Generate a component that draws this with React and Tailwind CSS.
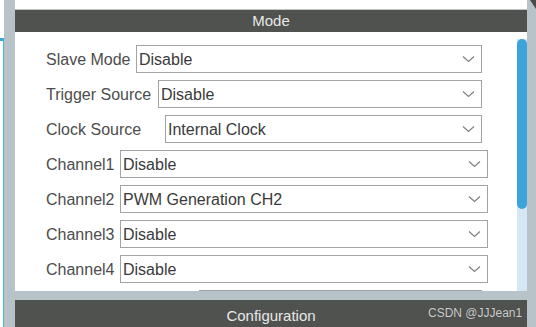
import React from "react";

const font = { fontFamily: '"Liberation Sans", Arial, sans-serif' };

function Chevron() {
  return (
    <svg width="13" height="8" viewBox="0 0 13 8" className="shrink-0">
      <polyline points="1,1.5 6.5,6.5 12,1.5" fill="none" stroke="#808080" strokeWidth="1.2" />
    </svg>
  );
}

function Row({ label, value, width, right }) {
  return (
    <div className="flex items-center h-[28px] shrink-0">
      <span className="text-[16px] text-[#4d4d4d] whitespace-nowrap pt-[2px]">{label}</span>
      <div
        className={`ml-auto h-[28px] border border-[#a3a3a3] bg-white flex items-center pl-[2px] pr-[6px] ${right ? "mr-[6px]" : ""}`}
        style={{ width }}
      >
        <span className="text-[16px] text-[#3a3a3a] whitespace-nowrap flex-1 pt-[1px]">{value}</span>
        <Chevron />
      </div>
    </div>
  );
}

export default function App() {
  return (
    <div className="w-[536px] h-[327px] bg-[#b7c2c9] flex overflow-hidden relative" style={font}>
      {/* left strip */}
      <div className="w-[4px] bg-white flex flex-col shrink-0">
        <div className="h-[38px]" />
        <div className="flex-1 border-t-[3px] border-t-[#3aa4db] border-r-[1px] border-r-[#4fb0e3]" />
      </div>
      <div className="w-[11px] shrink-0" />
      {/* main panel */}
      <div className="w-[512px] flex flex-col shrink-0">
        <div className="h-[9px] bg-white border-b border-[#c4c4c4] box-content" />
        <div className="h-[23px] bg-[#505250] flex items-center justify-center text-[15px] text-[#e8e8e8]">
          Mode
        </div>
        <div className="h-[264px] flex bg-white overflow-hidden">
          <div className="flex-1 flex flex-col gap-[7px] pt-[13px] pl-[31px] pr-[29px] overflow-hidden">
            <Row label="Slave Mode" value="Disable" width="346px" right />
            <Row label="Trigger Source" value="Disable" width="324px" right />
            <Row label="Clock Source" value="Internal Clock" width="317px" right />
            <Row label="Channel1" value="Disable" width="368px" />
            <Row label="Channel2" value="PWM Generation CH2" width="368px" />
            <Row label="Channel3" value="Disable" width="368px" />
            <Row label="Channel4" value="Disable" width="368px" />
            <Row label="" value="" width="283px" right />
          </div>
          <div className="w-[10px] flex flex-col shrink-0">
            <div className="h-[7px] bg-white" />
            <div className="flex-1 bg-[#d6e7f4] flex flex-col">
              <div className="h-[170px] bg-[#3aa4db] rounded-t-[5px] rounded-b-[5px]" />
            </div>
          </div>
        </div>
        <div className="h-[9px]" />
        <div className="flex-1 bg-[#505250] flex items-start justify-center pt-[5px] text-[15px] text-[#e8e8e8] relative">
          Configuration
        </div>
      </div>
      <div className="flex-1" />
      {/* top-right corner triangle */}
      <svg className="absolute right-0 top-0" width="8" height="10" viewBox="0 0 8 10">
        <polygon points="2,0 8,0 8,9" fill="#4a4a4a" />
      </svg>
      {/* watermark */}
      <div className="absolute left-[428px] top-[304px] text-[12px] text-[#cfcfcf] whitespace-nowrap" style={{ textShadow: "0 0 1px #333" }}>
        CSDN @JJJean1
      </div>
    </div>
  );
}
